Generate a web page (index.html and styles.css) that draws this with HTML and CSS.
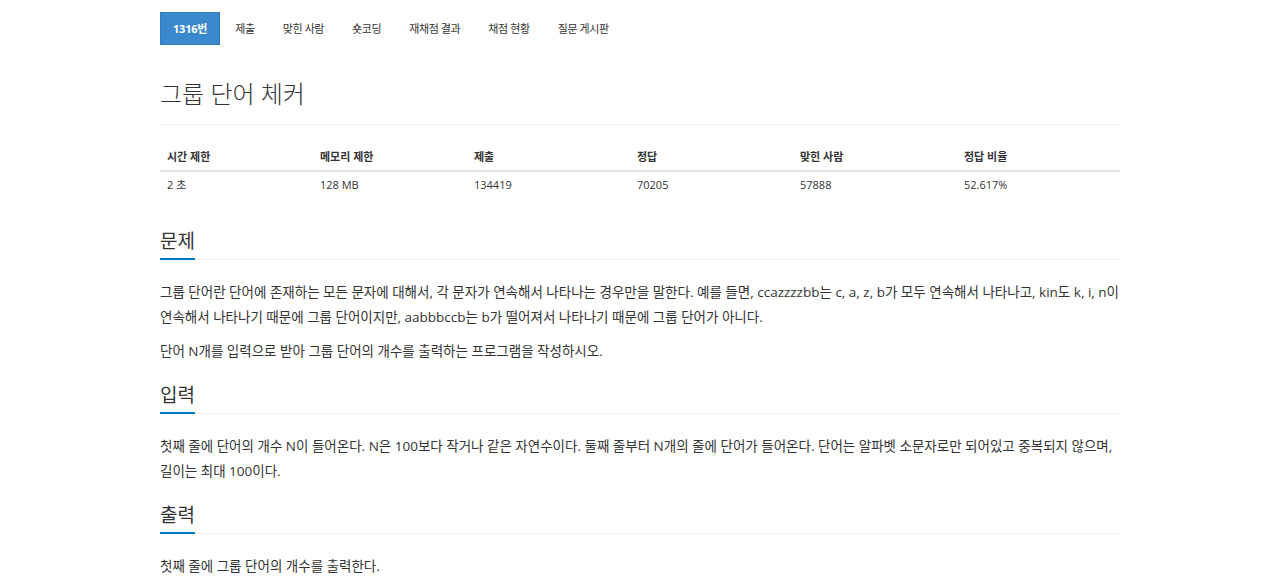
FILE: index.html
```html
<!DOCTYPE html>
<html lang="ko">
<head>
  <meta charset="UTF-8">
  <meta name="viewport" content="width=device-width, initial-scale=1.0">
  <title>1316번: 그룹 단어 체커</title>
  <link rel="stylesheet" href="styles.css">
</head>
<body>
  <div class="container">
    <!-- 문제 메뉴 -->
    <ul class="problem-menu">
      <li class="active"><a href="#">1316번</a></li>
      <li><a href="#">제출</a></li>
      <li><a href="#">맞힌 사람</a></li>
      <li><a href="#">숏코딩</a></li>
      <li><a href="#">재채점 결과</a></li>
      <li><a href="#">채점 현황</a></li>
      <li><a href="#">질문 게시판</a></li>
    </ul>

    <div class="page-header">
      <h1 id="problem_title">그룹 단어 체커</h1>
    </div>

    <table id="problem-info">
      <colgroup>
        <col class="col-time">
        <col class="col-memory">
        <col class="col-submit">
        <col class="col-wide">
        <col class="col-wide2">
        <col class="col-wide">
      </colgroup>
      <thead>
        <tr>
          <th>시간 제한</th>
          <th>메모리 제한</th>
          <th>제출</th>
          <th>정답</th>
          <th>맞힌 사람</th>
          <th>정답 비율</th>
        </tr>
      </thead>
      <tbody>
        <tr>
          <td>2 초</td>
          <td>128 MB</td>
          <td>134419</td>
          <td>70205</td>
          <td>57888</td>
          <td>52.617%</td>
        </tr>
      </tbody>
    </table>

    <section class="problem-section">
      <div class="headline"><h2>문제</h2></div>
      <div class="problem-text">
        <p>그룹 단어란 단어에 존재하는 모든 문자에 대해서, 각 문자가 연속해서 나타나는 경우만을 말한다. 예를 들면, ccazzzzbb는 c, a, z, b가 모두 연속해서 나타나고, kin도 k, i, n이 연속해서 나타나기 때문에 그룹 단어이지만, aabbbccb는 b가 떨어져서 나타나기 때문에 그룹 단어가 아니다.</p>
        <p>단어 N개를 입력으로 받아 그룹 단어의 개수를 출력하는 프로그램을 작성하시오.</p>
      </div>
    </section>

    <section class="problem-section">
      <div class="headline"><h2>입력</h2></div>
      <div class="problem-text">
        <p>첫째 줄에 단어의 개수 N이 들어온다. N은 100보다 작거나 같은 자연수이다. 둘째 줄부터 N개의 줄에 단어가 들어온다. 단어는 알파벳 소문자로만 되어있고 중복되지 않으며, 길이는 최대 100이다.</p>
      </div>
    </section>

    <section class="problem-section">
      <div class="headline"><h2>출력</h2></div>
      <div class="problem-text">
        <p>첫째 줄에 그룹 단어의 개수를 출력한다.</p>
      </div>
    </section>
  </div>
</body>
</html>
```

FILE: styles.css
```css
body {
  margin: 0;
  background: #fff;
  color: #333;
  font-family: "Open Sans", "Noto Sans CJK KR", sans-serif;
  font-size: 13.5px;
}

.container {
  width: 960px;
  margin: 0 auto;
}

/* 상단 문제 메뉴 */
.problem-menu {
  display: flex;
  list-style: none;
  margin: 12px 0 0;
  padding: 0;
}

.problem-menu li {
  margin-right: 2px;
}

.problem-menu a {
  display: block;
  padding: 10px 13px;
  font-size: 11px;
  line-height: 13px;
  letter-spacing: -0.4px;
  color: #333;
  text-decoration: none;
}

.problem-menu li.active a {
  background-color: #3b89cc;
  border: 1px solid #2f7ac0;
  padding: 9px 12px;
  color: #fff;
  font-weight: bold;
  letter-spacing: -0.2px;
}

/* 제목 */
.page-header {
  margin-top: 36px;
  padding-bottom: 17px;
  border-bottom: 1px solid #eee;
}

.page-header h1 {
  margin: 0;
  font-size: 24px;
  line-height: 26px;
  font-weight: 300;
  color: #333;
}

/* 시간 제한 / 메모리 제한 표 */
#problem-info {
  width: 100%;
  margin-top: 12px;
  border-collapse: collapse;
  table-layout: fixed;
  font-size: 11px;
}

.col-time { width: 153px; }
.col-memory { width: 154px; }
.col-submit { width: 163px; }
.col-wide { width: 163px; }
.col-wide2 { width: 164px; }

#problem-info th {
  text-align: left;
  font-weight: bold;
  padding: 11px 7px 5px;
  line-height: 17px;
  border-bottom: 2px solid #e5e5e5;
}

#problem-info td {
  padding: 5px 7px 4px;
  line-height: 16px;
}

/* 문제 / 입력 / 출력 */
.problem-section {
  margin-top: 33px;
}

.problem-section + .problem-section {
  margin-top: 20px;
}

.headline {
  border-bottom: 1px solid #eee;
}

.headline h2 {
  display: inline-block;
  margin: 0 0 -1px;
  padding-bottom: 6px;
  font-size: 19px;
  line-height: 22px;
  font-weight: normal;
  color: #333;
  border-bottom: 2px solid #0076c0;
}

.problem-text {
  margin-top: 20px;
  word-break: keep-all;
}

.problem-text p {
  margin: 0 0 9px;
  line-height: 25px;
}

.problem-text p:last-child {
  margin-bottom: 0;
}
```
